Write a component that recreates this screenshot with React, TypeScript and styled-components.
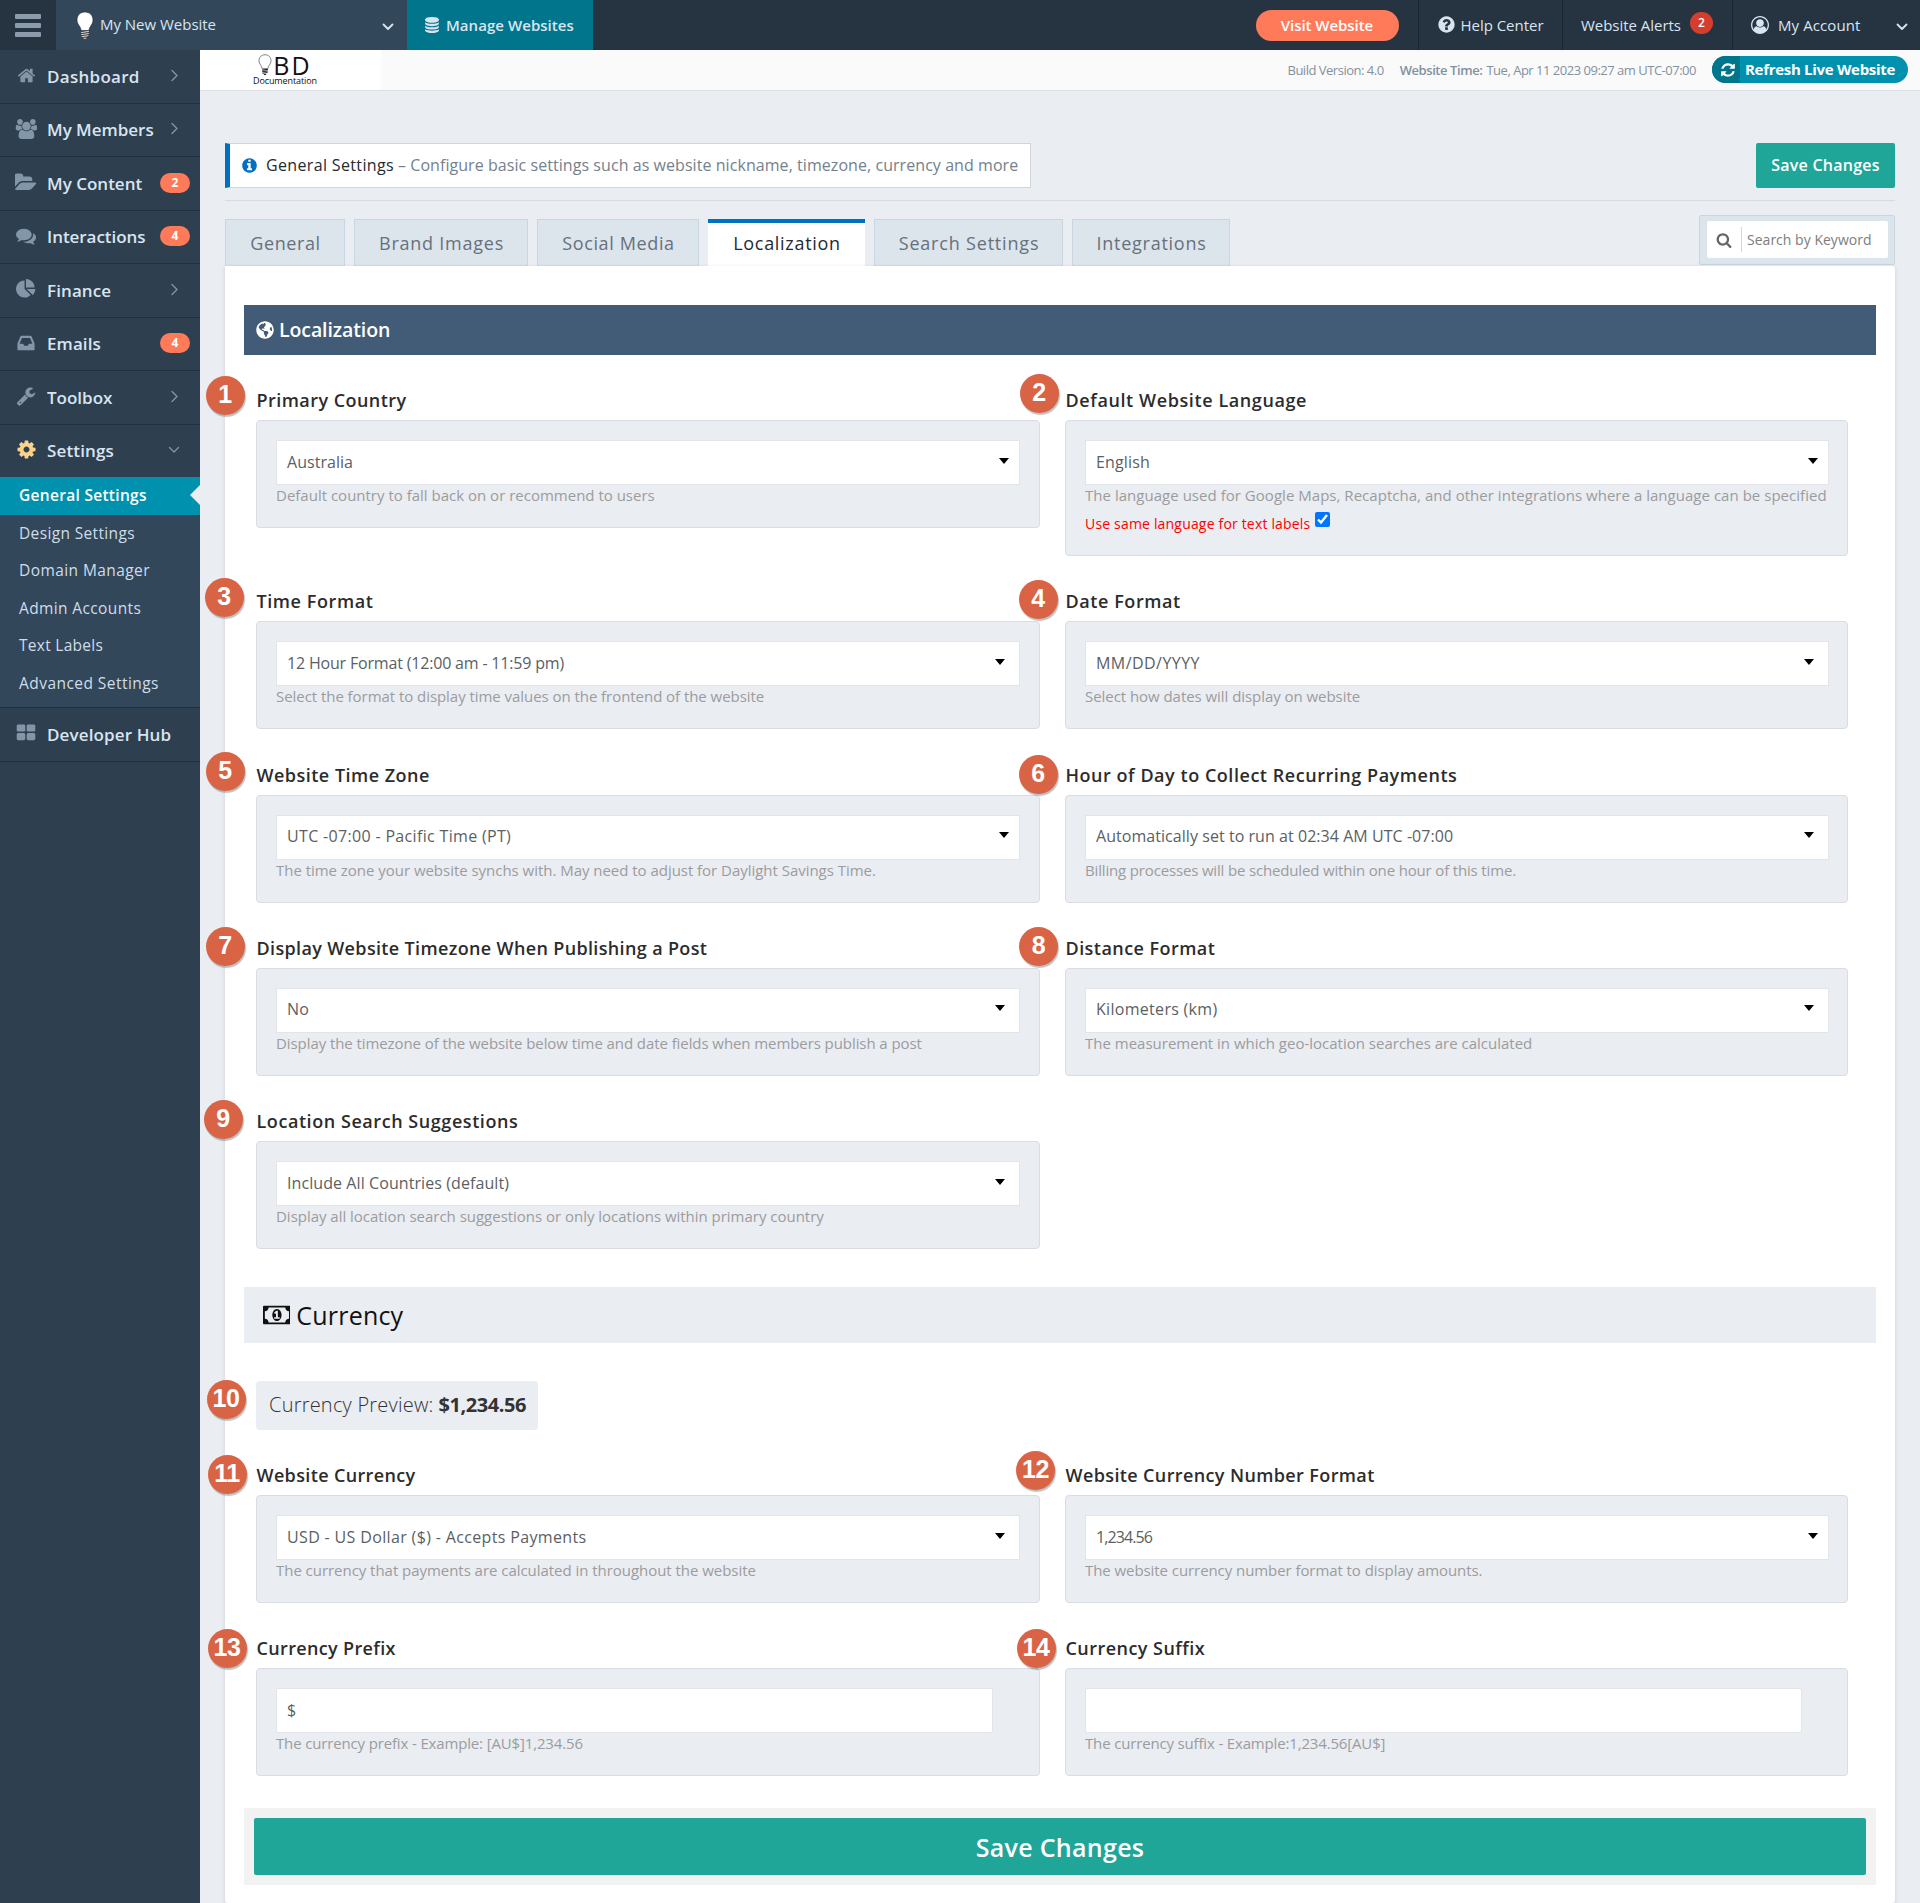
import React from "react";
import styled, { createGlobalStyle, css } from "styled-components";
import { FaGlobeAmericas } from "react-icons/fa";

/* ---------- global ---------- */

const GlobalStyle = createGlobalStyle`
  *, *::before, *::after { box-sizing: border-box; }
  body {
    margin: 0;
    background: #eaedf2;
    font-family: "Open Sans", "Noto Sans", sans-serif;
    color: #333;
  }
`;

const text = css<{ $track?: number }>`
  letter-spacing: ${(p) => p.$track ?? 0}px;
  white-space: nowrap;
`;

/* ---------- icons ---------- */

type IconProps = { path: string; h: number; minX?: number; boxW?: number };

const Glyph = styled.svg`
  display: block;
  flex: none;
  fill: currentColor;
`;

const Icon = ({ path, h, minX = 0, boxW = 1792 }: IconProps) => (
  <Glyph width={(h * boxW) / 1792} height={h} viewBox={`${minX} 0 ${boxW} 1792`} aria-hidden>
    <path d={path} />
  </Glyph>
);

const I = {
  home: "M1472 992v480q0 26-19 45t-45 19h-384v-384h-256v384h-384q-26 0-45-19t-19-45v-480q0-1 .5-3t.5-3l575-474 575 474q1 2 1 6zm223-69l-62 74q-8 9-21 11h-3q-13 0-21-7l-692-577-692 577q-12 8-24 7-13-2-21-11l-62-74q-8-10-7-23.5t11-21.5l719-599q32-26 76-26t76 26l244 204v-195q0-14 9-23t23-9h192q14 0 23 9t9 23v408l219 182q10 8 11 21.5t-7 23.5z",
  users: "M657 896q-162 5-265 128h-134q-82 0-138-40.5t-56-118.5q0-353 124-353 6 0 43.5 21t97.5 42.5 119 21.5q67 0 133-23-5 37-5 66 0 139 81 256zm1071 637q0 120-73 189.5t-194 69.5h-874q-121 0-194-69.5t-73-189.5q0-53 3.5-103.5t14-109 26.5-108.5 43-97.5 62-81 85.5-53.5 111.5-20q10 0 43 21.5t73 48 107 48 135 21.5 135-21.5 107-48 73-48 43-21.5q61 0 111.5 20t85.5 53.5 62 81 43 97.5 26.5 108.5 14 109 3.5 103.5zm-1024-1277q0 106-75 181t-181 75-181-75-75-181 75-181 181-75 181 75 75 181zm704 384q0 159-112.5 271.5t-271.5 112.5-271.5-112.5-112.5-271.5 112.5-271.5 271.5-112.5 271.5 112.5 112.5 271.5zm576 225q0 78-56 118.5t-138 40.5h-134q-103-123-265-128 81-117 81-256 0-29-5-66 66 23 133 23 59 0 119-21.5t97.5-42.5 43.5-21q124 0 124 353zm-128-609q0 106-75 181t-181 75-181-75-75-181 75-181 181-75 181 75 75 181z",
  folder: "M1815 952q0 31-31 66l-336 396q-43 51-120.5 86.5t-143.5 35.5h-1088q-34 0-60.5-13t-26.5-43q0-31 31-66l336-396q43-51 120.5-86.5t143.5-35.5h1088q34 0 60.5 13t26.5 43zm-343-344v160h-832q-94 0-197 47.5t-164 119.5l-337 396-5 6q0-4-.5-12.5t-.5-12.5v-960q0-92 66-158t158-66h320q92 0 158 66t66 158v32h544q92 0 158 66t66 158z",
  comments: "M1408 768q0 139-94 257t-256.5 186.5-353.5 68.5q-86 0-176-16-124 88-278 128-36 9-86 16h-3q-11 0-20.5-8t-11.5-21q-1-3-1-6.5t.5-6.5 2-6l2.5-5 3.5-5.5 4-5 4.5-5 4-4.5q5-6 23-25t26-29.5 22.5-29 25-38.5 20.5-44q-124-72-195-177t-71-224q0-139 94-257t256.5-186.5 353.5-68.5 353.5 68.5 256.5 186.5 94 257zm384 256q0 120-71 224.5t-195 176.5q10 24 20.5 44t25 38.5 22.5 29 26 29.5 23 25q1 1 4 4.5t4.5 5 4 5 3.5 5.5l2.5 5 2 6 .5 6.5-1 6.5q-3 14-13 22t-22 7q-50-7-86-16-154-40-278-128-90 16-176 16-271 0-472-132 58 4 88 4 161 0 309-45t264-129q125-92 192-212t67-254q0-77-23-152 129 71 204 178t75 230z",
  pie: "M768 890l546 546q-106 108-247.5 168t-298.5 60q-209 0-385.5-103t-279.5-279.5-103-385.5 103-385.5 279.5-279.5 385.5-103v762zm187 6h773q0 157-60 298.5t-168 247.5zm709-128h-768v-768q209 0 385.5 103t279.5 279.5 103 385.5z",
  inbox: "M1151 960h316q-1-3-2.5-8.5t-2.5-7.5l-212-496h-708l-212 496q-1 3-2.5 8.5t-2.5 7.5h316l95 192h320zm513 30v482q0 26-19 45t-45 19h-1408q-26 0-45-19t-19-45v-482q0-62 25-123l238-552q10-25 36.5-42t52.5-17h832q26 0 52.5 17t36.5 42l238 552q25 61 25 123z",
  wrench: "M448 1472q0-26-19-45t-45-19-45 19-19 45 19 45 45 19 45-19 19-45zm644-420l-682 682q-37 37-90 37-52 0-91-37l-106-108q-38-36-38-90 0-53 38-91l681-681q39 98 114.5 173.5t173.5 114.5zm634-435q0 39-23 106-47 134-164.5 217.5t-258.5 83.5q-185 0-316.5-131.5t-131.5-316.5 131.5-316.5 316.5-131.5q58 0 121.5 16.5t107.5 46.5q16 11 16 28t-16 28l-293 169v224l193 107q5-3 79-48.5t135.5-81 70.5-35.5q15 0 23.5 10t8.5 25z",
  cog: "M1152 896q0-106-75-181t-181-75-181 75-75 181 75 181 181 75 181-75 75-181zm512-109v222q0 12-8 23t-20 13l-185 28q-19 54-39 91 35 50 107 138 10 12 10 25t-9 23q-27 37-99 108t-94 71q-12 0-26-9l-138-108q-44 23-91 38-16 136-29 186-7 28-36 28h-222q-14 0-24.5-8.5t-11.5-21.5l-28-184q-49-16-90-37l-141 107q-10 9-25 9-14 0-25-11-126-114-165-168-7-10-7-23 0-12 8-23 15-21 51-66.5t54-70.5q-27-50-41-99l-183-27q-13-2-21-12.5t-8-23.5v-222q0-12 8-23t19-13l186-28q14-46 39-92-40-57-107-138-10-12-10-24 0-10 9-23 26-36 98.5-107.5t94.5-71.5q13 0 26 10l138 107q44-23 91-38 16-136 29-186 7-28 36-28h222q14 0 24.5 8.5t11.5 21.5l28 184q49 16 90 37l142-107q9-9 24-9 13 0 25 10 129 119 165 170 7 8 7 22 0 12-8 23-15 21-51 66.5t-54 70.5q26 50 41 98l183 28q13 2 21 12.5t8 23.5z",
  grid: "M832 1024v384q0 52-38 90t-90 38h-512q-52 0-90-38t-38-90v-384q0-52 38-90t90-38h512q52 0 90 38t38 90zm0-768v384q0 52-38 90t-90 38h-512q-52 0-90-38t-38-90v-384q0-52 38-90t90-38h512q52 0 90 38t38 90zm896 768v384q0 52-38 90t-90 38h-512q-52 0-90-38t-38-90v-384q0-52 38-90t90-38h512q52 0 90 38t38 90zm0-768v384q0 52-38 90t-90 38h-512q-52 0-90-38t-38-90v-384q0-52 38-90t90-38h512q52 0 90 38t38 90z",
  database: "M896 768q237 0 443-43t325-127v170q0 69-103 128t-280 93.5-385 34.5-385-34.5-280-93.5-103-128v-170q119 84 325 127t443 43zm0 768q237 0 443-43t325-127v170q0 69-103 128t-280 93.5-385 34.5-385-34.5-280-93.5-103-128v-170q119 84 325 127t443 43zm0-384q237 0 443-43t325-127v170q0 69-103 128t-280 93.5-385 34.5-385-34.5-280-93.5-103-128v-170q119 84 325 127t443 43zm0-1152q208 0 385 34.5t280 93.5 103 128v128q0 69-103 128t-280 93.5-385 34.5-385-34.5-280-93.5-103-128v-128q0-69 103-128t280-93.5 385-34.5z",
  search: "M1216 832q0-185-131.5-316.5t-316.5-131.5-316.5 131.5-131.5 316.5 131.5 316.5 316.5 131.5 316.5-131.5 131.5-316.5zm512 832q0 52-38 90t-90 38q-54 0-90-38l-343-342q-179 124-399 124-143 0-273.5-55.5t-225-150-150-225-55.5-273.5 55.5-273.5 150-225 225-150 273.5-55.5 273.5 55.5 225 150 150 225 55.5 273.5q0 220-124 399l343 343q37 37 37 90z",
  refresh: "M1639 1056q0 5-1 7-64 268-268 434.5t-478 166.5q-146 0-282.5-55t-243.5-157l-129 129q-19 19-45 19t-45-19-19-45v-448q0-26 19-45t45-19h448q26 0 45 19t19 45-19 45l-137 137q71 66 161 102t187 36q134 0 250-65t186-179q11-17 53-117 8-23 30-23h192q13 0 22.5 9.5t9.5 22.5zm25-800v448q0 26-19 45t-45 19h-448q-26 0-45-19t-19-45 19-45l138-138q-148-137-349-137-134 0-250 65t-186 179q-11 17-53 117-8 23-30 23h-199q-13 0-22.5-9.5t-9.5-22.5v-7q65-268 270-434.5t480-166.5q146 0 284 55.5t245 156.5l130-129q19-19 45-19t45 19 19 45z",
  info: "M1152 1376v-160q0-14-9-23t-23-9h-96v-512q0-14-9-23t-23-9h-320q-14 0-23 9t-9 23v160q0 14 9 23t23 9h96v320h-96q-14 0-23 9t-9 23v160q0 14 9 23t23 9h448q14 0 23-9t9-23zm-128-896v-160q0-14-9-23t-23-9h-192q-14 0-23 9t-9 23v160q0 14 9 23t23 9h192q14 0 23-9t9-23zm640 416q0 209-103 385.5t-279.5 279.5-385.5 103-385.5-103-279.5-279.5-103-385.5 103-385.5 279.5-279.5 385.5-103 385.5 103 279.5 279.5 103 385.5z",
  question: "M1024 1376v-192q0-14-9-23t-23-9h-192q-14 0-23 9t-9 23v192q0 14 9 23t23 9h192q14 0 23-9t9-23zm256-672q0-88-55.5-163t-138.5-116-170-41q-243 0-371 213-15 24 8 42l132 100q7 6 19 6 16 0 25-12 53-68 86-92 34-24 86-24 48 0 85.5 26t37.5 59q0 38-20 61t-68 45q-63 28-115.5 86.5t-52.5 125.5v36q0 14 9 23t23 9h192q14 0 23-9t9-23q0-19 21.5-49.5t54.5-49.5q32-18 49-28.5t46-35 44.5-48 28-60.5 12.5-81zm384 192q0 209-103 385.5t-279.5 279.5-385.5 103-385.5-103-279.5-279.5-103-385.5 103-385.5 279.5-279.5 385.5-103 385.5 103 279.5 279.5 103 385.5z",
  user: "M896 0q182 0 348 71t286 191 191 286 71 348q0 181-70.5 347t-190.5 286-286 191.5-349 71.5-349-71-285.5-191.5-190.5-286-71-347.5 71-348 191-286 286-191 348-71zm619 1351q149-205 149-455 0-156-61-298t-164-245-245-164-298-61-298 61-245 164-164 245-61 298q0 250 149 455 66-327 306-327 131 128 313 128t313-128q240 0 306 327zm-235-647q0-159-112.5-271.5t-271.5-112.5-271.5 112.5-112.5 271.5 112.5 271.5 271.5 112.5 271.5-112.5 112.5-271.5z",
  money: "M704 1152h384v-96h-128v-448h-114l-148 137 77 80q42-37 55-57h2v288h-128v96zm512-256q0 70-21 142t-59.5 134-101.5 101-138 39-138-39-101.5-101-59.5-134-21-142 21-142 59.5-134 101.5-101 138-39 138 39 101.5 101 59.5 134 21 142zm512 256v-512q-106 0-181-75t-75-181h-1152q0 106-75 181t-181 75v512q106 0 181 75t75 181h1152q0-106 75-181t181-75zm128-832v1152q0 26-19 45t-45 19h-1792q-26 0-45-19t-19-45v-1152q0-26 19-45t45-19h1792q26 0 45 19t19 45z",
};

const Chevron = ({ w, h, d, weight }: { w: number; h: number; d: string; weight: number }) => (
  <svg width={w} height={h} viewBox={`0 0 ${w} ${h}`} fill="none" stroke="currentColor" strokeWidth={weight} strokeLinecap="round" strokeLinejoin="round" aria-hidden>
    <path d={d} />
  </svg>
);

const Bulb = ({ w, h, filled }: { w: number; h: number; filled?: boolean }) => (
  <svg width={w} height={h} viewBox="0 0 18 28" aria-hidden>
    <path
      d="M9 1C4 1 1 4.600 1 9c0 3.700 2.500 5.600 3.500 8.200.4 1 .5 1.800.6 2.300h7.800c.1-.5.200-1.300.6-2.300C14.500 14.600 17 12.700 17 9c0-4.400-3-8-8-8z"
      fill={filled ? "#fff" : "none"}
      stroke={filled ? "#222" : "#555"}
      strokeWidth={filled ? 0.6 : 1}
    />
    {filled && <path d="M5.200 20h7.600v6l-2 2H7.200l-2-2z" fill="#333" />}
    <path
      d="M5.200 21.500l7.600-1M5.200 23.600l7.600-1M5.600 25.700l6.800-1M7.500 27.200h3"
      stroke={filled ? "#e8e8e8" : "#222"}
      strokeWidth={filled ? 1 : 1.4}
      fill="none"
    />
  </svg>
);

/* ---------- top bar ---------- */

const TopBar = styled.header`
  display: flex;
  height: 50px;
  background: #263341;
  color: #d8e5f0;
  font-size: 15px;
`;

const MenuButton = styled.div`
  width: 56px;
  display: flex;
  flex-direction: column;
  align-items: center;
  justify-content: center;
  gap: 4px;
`;

const MenuLine = styled.span`
  width: 26px;
  height: 5px;
  border-radius: 1px;
  background: #8b9bab;
`;

const SiteSelect = styled.div`
  width: 351px;
  display: flex;
  align-items: center;
  padding: 0 13px 0 20px;
  background: #33475b;
`;

const SiteName = styled.span`
  ${text}
  flex: 1;
  margin: -2px 0 0 6px;
`;

const SelectCaret = styled.span`
  display: flex;
  margin-top: 3px;
`;

const ManageButton = styled.div`
  width: 186px;
  display: flex;
  align-items: center;
  gap: 6px;
  padding: 0 0 1px 17px;
  background: #00758c;
  font-weight: 600;
`;

const Label = styled.span<{ $track?: number }>`
  ${text}
`;

const TopRight = styled.div`
  display: flex;
  align-items: center;
  margin-left: auto;
`;

const VisitButton = styled.div`
  width: 143px;
  height: 31px;
  margin-right: 19px;
  border-radius: 16px;
  background: #ff7a59;
  color: #fff;
  font-weight: 600;
  line-height: 30px;
  text-align: center;
`;

const TopItem = styled.div<{ $width: number; $gap: number }>`
  display: flex;
  align-items: center;
  gap: ${(p) => p.$gap}px;
  width: ${(p) => p.$width}px;
  height: 50px;
  padding: 0 0 1px 18px;
  border-left: 1px solid #1a2531;
`;

const AlertBadge = styled.span`
  width: 23px;
  height: 22px;
  margin-top: -3px;
  border-radius: 11px;
  background: #d53d2e;
  color: #fff;
  font-size: 12px;
  font-weight: 600;
  line-height: 22px;
  text-align: center;
`;

const AccountCaret = styled.span`
  display: flex;
  margin: 4px 12px 0 auto;
`;

/* ---------- sidebar ---------- */

const Body = styled.div`
  display: flex;
  height: 1853px;
`;

const Sidebar = styled.nav`
  flex: none;
  width: 200px;
  background: #2e3f50;
`;

const SideRow = styled.div<{ $last?: boolean }>`
  display: flex;
  align-items: center;
  height: ${(p) => (p.$last ? 52.5 : 53.5)}px;
  padding-left: 15px;
  border-bottom: ${(p) => (p.$last ? 0 : 1)}px solid #223140;
  color: #d8e5f0;
  font-size: 17px;
  font-weight: 600;
`;

const SideIcon = styled.span<{ $active?: boolean }>`
  display: flex;
  justify-content: center;
  width: 22px;
  margin: 0 10px 2px 0;
  color: ${(p) => (p.$active ? "#fbd287" : "#8296a8")};
`;

const SideArrow = styled.span`
  display: flex;
  justify-content: center;
  width: 12px;
  margin: 0 20px 2px auto;
  color: #8296a8;
`;

const SideBadge = styled.span`
  width: 30px;
  height: 20px;
  margin: 0 10px 1px auto;
  border-radius: 10px;
  background: #ff7a59;
  color: #fff;
  font-size: 12px;
  font-weight: 700;
  line-height: 20px;
  text-align: center;
`;

const SubMenu = styled.div`
  padding-bottom: 5px;
  border-bottom: 1px solid #223140;
  background: #33475b;
`;

const SubItem = styled.div<{ $active?: boolean }>`
  display: flex;
  align-items: center;
  height: 37.5px;
  padding: 0 0 1px 19px;
  font-size: 15.500px;
  color: #cfdde9;
  ${(p) =>
    p.$active &&
    css`
      background: #0091ae;
      color: #fff;
      font-weight: 600;
    `}
`;

const SubPointer = styled.i`
  margin-left: auto;
  border: 10px solid transparent;
  border-left: 0;
  border-right-color: #eaedf2;
`;

/* ---------- main ---------- */

const Main = styled.main`
  flex: 1;
  display: flex;
  flex-direction: column;
  min-width: 0;
`;

const StatusBar = styled.div`
  display: flex;
  align-items: center;
  height: 41px;
  padding: 0 12px 1px 0;
  border-bottom: 1px solid #dcdfe3;
  background: #fafafa;
  color: #8391a0;
  font-size: 13px;
`;

const LogoBox = styled.div`
  display: flex;
  flex-direction: column;
  align-items: center;
  width: 181px;
  height: 40px;
  padding: 4px 11px 0 0;
  background: #fff;
  color: #111;
`;

const LogoTop = styled.div`
  display: flex;
  align-items: center;
  gap: 1px;
  height: 22px;
`;

const LogoLetters = styled.span`
  font-size: 25px;
  line-height: 22px;
  letter-spacing: 2px;
`;

const LogoCaption = styled.span`
  ${text}
  font-size: 9px;
  line-height: 10px;
`;

const BuildInfo = styled.div`
  display: flex;
  align-items: center;
  margin-left: auto;
`;

const TimeLabel = styled.b<{ $track?: number }>`
  ${text}
  margin: 0 4px 0 16px;
  font-weight: 600;
`;

const RefreshButton = styled.div`
  display: flex;
  align-items: center;
  width: 196px;
  height: 27px;
  margin-left: 16px;
  border-radius: 14px;
  overflow: hidden;
  background: #0091ae;
  color: #fff;
  font-size: 15px;
  font-weight: 700;
  line-height: 24px;
`;

const RefreshIcon = styled.span`
  display: flex;
  align-items: center;
  justify-content: center;
  width: 28px;
  height: 27px;
  margin-right: 5px;
  padding-left: 3px;
  background: #00758c;
`;

const RefreshText = styled(Label)`
  margin-top: -2px;
`;

const Content = styled.div`
  flex: 1;
  display: flex;
  flex-direction: column;
  padding: 52px 25px 0;
`;

const IntroRow = styled.div`
  display: flex;
  justify-content: space-between;
  padding-bottom: 12px;
  border-bottom: 1px solid #d8dadf;
`;

const IntroBox = styled.div`
  display: flex;
  align-items: center;
  width: 806px;
  height: 45px;
  padding: 0 0 1px 11px;
  border: 1px solid #d0d5da;
  border-left: 5px solid #0070c0;
  background: #fff;
  color: #0070c0;
  font-size: 16px;
`;

const IntroTitle = styled.span`
  ${text}
  margin: 0 4px 0 8px;
  color: #222b33;
`;

const IntroText = styled.span`
  ${text}
  color: #74818d;
`;

const SaveButton = styled.div<{ $big?: boolean }>`
  display: flex;
  align-items: center;
  justify-content: center;
  width: ${(p) => (p.$big ? "auto" : "139px")};
  height: ${(p) => (p.$big ? 57 : 45)}px;
  padding-bottom: ${(p) => (p.$big ? 0 : 1)}px;
  border-radius: 2px;
  background: #1fa699;
  color: #fff;
  font-size: ${(p) => (p.$big ? 25 : 16)}px;
  font-weight: 600;
`;

const TabsRow = styled.div`
  display: flex;
  align-items: flex-end;
  gap: 9px;
  height: 51px;
  margin-top: 14px;
`;

const Tab = styled.div<{ $width: number; $active?: boolean }>`
  ${text}
  width: ${(p) => p.$width}px;
  height: 47px;
  padding-left: 1px;
  border: 1px solid #c9d6e2;
  border-bottom-color: #d3dee8;
  background: #dce4ec;
  color: #66717c;
  font-size: 18px;
  line-height: 46px;
  text-align: center;
  ${(p) =>
    p.$active &&
    css`
      border: 0;
      border-top: 4px solid #0070c0;
      background: #fff;
      color: #222b33;
      line-height: 41px;
    `}
`;

const SearchFrame = styled.div`
  width: 196px;
  height: 50px;
  margin: 0 0 1px auto;
  padding: 5px 6px 6px 7px;
  border: 1px solid #c9d6e2;
  border-radius: 2px;
  background: #dce4ec;
`;

const SearchInput = styled.div`
  display: flex;
  align-items: center;
  height: 37px;
  border-radius: 2px;
  background: #fff;
  color: #666;
`;

const SearchIcon = styled.span`
  display: flex;
  align-items: center;
  justify-content: center;
  width: 35px;
  height: 25px;
  border-right: 1px solid #d5d5d5;
`;

const SearchHint = styled.span`
  ${text}
  margin-left: 5px;
  color: #7d7d7d;
  font-size: 14px;
`;

const Panel = styled.section`
  flex: 1;
  padding: 39px 19px 0;
  border-radius: 0 3px 3px 3px;
  background: #fff;
  box-shadow: 0 1px 4px rgba(60, 80, 110, 0.16);
`;

const SectionBar = styled.h2`
  display: flex;
  align-items: center;
  gap: 5px;
  height: 50px;
  margin: 0 0 29px;
  padding: 0 0 1px 12px;
  background: #425b76;
  color: #fff;
  font-size: 19.500px;
  font-weight: 600;
`;

const CurrencyBar = styled.h2`
  display: flex;
  align-items: center;
  gap: 6px;
  height: 56px;
  margin: 38px 0 38px;
  padding: 0 0 0 18.500px;
  background: #eaedf2;
  color: #111;
  font-size: 25px;
  font-weight: 500;
`;

const FieldGrid = styled.div`
  display: grid;
  grid-template-columns: 784px 783px;
  column-gap: 25px;
  row-gap: 29.250px;
  align-items: start;
  padding-left: 12px;
`;

const FieldCell = styled.div`
  position: relative;
`;

const FieldLabel = styled.div`
  ${text}
  height: 36px;
  padding-left: 0.5px;
  color: #2c2c2c;
  font-size: 18px;
  font-weight: 600;
  line-height: 32px;
`;

const FieldBox = styled.div<{ $tall?: boolean }>`
  height: ${(p) => (p.$tall ? 136 : 108)}px;
  padding: 19px;
  border: 1px solid #d9dde3;
  border-radius: 4px;
  background: #eaedf2;
`;

const Control = styled.div<{ $input?: boolean; $inset?: number }>`
  display: flex;
  align-items: center;
  justify-content: space-between;
  width: ${(p) => (p.$input ? "717px" : "744px")};
  height: 45px;
  padding: 0 ${(p) => p.$inset ?? 14}px 2px 10px;
  border: 1px solid #e2e4e7;
  border-radius: ${(p) => (p.$input ? 2 : 0)}px;
  background: #fff;
  color: #5a5f63;
  font-size: 16px;
`;

const Caret = styled.i`
  margin-top: -2px;
  border: 5px solid transparent;
  border-top: 6px solid #000;
  border-bottom: 0;
`;

const Help = styled.div`
  ${text}
  height: 24px;
  color: #9c9c9e;
  font-size: 15px;
  line-height: 21px;
`;

const SameLanguage = styled.label`
  display: flex;
  align-items: center;
  gap: 5px;
  height: 29px;
  color: #f00;
  font-size: 14px;
`;

const Checkbox = styled.input.attrs({ type: "checkbox" })`
  width: 15px;
  height: 15px;
  margin: 0 0 8px;
  accent-color: #0075ff;
`;

const Marker = styled.span<{ $x: number; $y: number }>`
  position: absolute;
  left: ${(p) => p.$x}px;
  top: ${(p) => p.$y}px;
  z-index: 1;
  width: 39px;
  height: 39px;
  border-radius: 50%;
  background: #d96445;
  box-shadow: 1px 2px 1px rgba(0, 0, 0, 0.25);
  color: #fff;
  font: 700 25px/37px "Liberation Sans", Arial, sans-serif;
  letter-spacing: -0.5px;
  text-align: center;
`;

const Preview = styled.div`
  position: relative;
  width: 282px;
  height: 49px;
  margin: 0 0 29px 12px;
  padding-left: 13px;
  border-radius: 4px;
  background: #eaedf2;
  color: #333;
  font-size: 20px;
  line-height: 48px;
`;

const PreviewText = styled.span<{ $bold?: boolean; $track?: number }>`
  ${text}
  font-weight: ${(p) => (p.$bold ? 700 : 300)};
  margin-right: 5px;
`;

const SubmitStrip = styled.div`
  margin-top: 32px;
  padding: 10px;
  background: #f2f2f2;
`;

/* ---------- data ---------- */

type Txt = [string, number];

type FieldData = {
  n: number;
  at: [number, number];
  label: Txt;
  value: Txt;
  help: Txt;
  inset?: number;
  input?: boolean;
  same?: boolean;
};

const sideItems: { label: Txt; icon: React.ReactNode; badge?: number }[] = [
  { label: ["Dashboard", 0.28], icon: <Icon path={I.home} h={19} /> },
  { label: ["My Members", -0.02], icon: <Icon path={I.users} h={20} boxW={2048} /> },
  { label: ["My Content", 0], icon: <Icon path={I.folder} h={21} boxW={1856} />, badge: 2 },
  { label: ["Interactions", -0.05], icon: <Icon path={I.comments} h={20} />, badge: 4 },
  { label: ["Finance", 0.1], icon: <Icon path={I.pie} h={20} /> },
  { label: ["Emails", 0.1], icon: <Icon path={I.inbox} h={20} />, badge: 4 },
  { label: ["Toolbox", 0], icon: <Icon path={I.wrench} h={20} /> },
];

const subItems: Txt[] = [
  ["Design Settings", 0.35],
  ["Domain Manager", 0.42],
  ["Admin Accounts", 0.37],
  ["Text Labels", 0.28],
  ["Advanced Settings", 0.45],
];

const tabs: { label: Txt; width: number; active?: boolean }[] = [
  { label: ["General", 0.61], width: 120 },
  { label: ["Brand Images", 0.76], width: 174 },
  { label: ["Social Media", 0.63], width: 162 },
  { label: ["Localization", 0.69], width: 157, active: true },
  { label: ["Search Settings", 0.81], width: 189 },
  { label: ["Integrations", 0.74], width: 158 },
];

const localization: FieldData[] = [
  { n: 1, at: [-50.5, -8], label: ["Primary Country", 0.45], value: ["Australia", 0.04], help: ["Default country to fall back on or recommend to users", 0] },
  { n: 2, at: [-45.5, -10.5], label: ["Default Website Language", 0.6], value: ["English", 0.16], help: ["The language used for Google Maps, Recaptcha, and other integrations where a language can be specified", 0.03], inset: 10, same: true },
  { n: 3, at: [-51.5, -7.5], label: ["Time Format", 0.58], value: ["12 Hour Format (12:00 am - 11:59 pm)", -0.18], help: ["Select the format to display time values on the frontend of the website", -0.05] },
  { n: 4, at: [-46.5, -5.5], label: ["Date Format", 0.58], value: ["MM/DD/YYYY", 0.45], help: ["Select how dates will display on website", -0.05] },
  { n: 5, at: [-50.5, -6.5], label: ["Website Time Zone", 0.48], value: ["UTC -07:00 - Pacific Time (PT)", 0.33], help: ["The time zone your website synchs with. May need to adjust for Daylight Savings Time.", -0.03], inset: 10 },
  { n: 6, at: [-46.5, -3.5], label: ["Hour of Day to Collect Recurring Payments", 0.54], value: ["Automatically set to run at 02:34 AM UTC -07:00", 0.05], help: ["Billing processes will be scheduled within one hour of this time.", -0.16] },
  { n: 7, at: [-50.5, -4.5], label: ["Display Website Timezone When Publishing a Post", 0.35], value: ["No", 0.3], help: ["Display the timezone of the website below time and date fields when members publish a post", -0.08] },
  { n: 8, at: [-46, -5], label: ["Distance Format", 0.45], value: ["Kilometers (km)", 0.3], help: ["The measurement in which geo-location searches are calculated", 0] },
  { n: 9, at: [-52.5, -5.5], label: ["Location Search Suggestions", 0.56], value: ["Include All Countries (default)", 0.08], help: ["Display all location search suggestions or only locations within primary country", -0.02] },
];

const currency: FieldData[] = [
  { n: 11, at: [-48.5, -4.5], label: ["Website Currency", 0.36], value: ["USD - US Dollar ($) - Accepts Payments", 0.35], help: ["The currency that payments are calculated in throughout the website", -0.04] },
  { n: 12, at: [-49, -8.5], label: ["Website Currency Number Format", 0.38], value: ["1,234.56", -0.9], help: ["The website currency number format to display amounts.", -0.07], inset: 10 },
  { n: 13, at: [-48.5, -3.5], label: ["Currency Prefix", 0.35], value: ["$", 0], help: ["The currency prefix - Example: [AU$]1,234.56", -0.15], input: true },
  { n: 14, at: [-48.5, -3.5], label: ["Currency Suffix", 0.46], value: ["", 0], help: ["The currency suffix - Example:1,234.56[AU$]", -0.16], input: true },
];

localization[0].inset = 10;

/* ---------- pieces ---------- */

const Field = ({ n, at, label, value, help, inset, input, same }: FieldData) => (
  <FieldCell>
    <Marker $x={at[0]} $y={at[1]}>{n}</Marker>
    <FieldLabel $track={label[1]}>{label[0]}</FieldLabel>
    <FieldBox $tall={same}>
      <Control $input={input} $inset={inset}>
        <Label $track={value[1]}>{value[0]}</Label>
        {!input && <Caret />}
      </Control>
      <Help $track={help[1]}>{help[0]}</Help>
      {same && (
        <SameLanguage>
          <Label $track={0.18}>Use same language for text labels</Label>
          <Checkbox defaultChecked />
        </SameLanguage>
      )}
    </FieldBox>
  </FieldCell>
);

const right = "M3 1.500l5 5-5 5";
const down = "M1.500 1.500l4.500 4.500 4.500-4.500";

export default function App() {
  return (
    <>
      <GlobalStyle />
      <TopBar>
        <MenuButton>
          <MenuLine />
          <MenuLine />
          <MenuLine />
        </MenuButton>
        <SiteSelect>
          <Bulb w={18} h={28} filled />
          <SiteName $track={-0.02}>My New Website</SiteName>
          <SelectCaret>
            <Chevron w={12} h={8} weight={1.8} d={down} />
          </SelectCaret>
        </SiteSelect>
        <ManageButton>
          <Icon path={I.database} h={16} />
          <Label $track={0.05}>Manage Websites</Label>
        </ManageButton>
        <TopRight>
          <VisitButton>
            <Label $track={-0.05}>Visit Website</Label>
          </VisitButton>
          <TopItem $width={144.5} $gap={5}>
            <Icon path={I.question} h={19} />
            <Label $track={-0.03}>Help Center</Label>
          </TopItem>
          <TopItem $width={170} $gap={9}>
            <Label $track={-0.03}>Website Alerts</Label>
            <AlertBadge>2</AlertBadge>
          </TopItem>
          <TopItem $width={188} $gap={9}>
            <Icon path={I.user} h={18} />
            <Label $track={0.1}>My Account</Label>
            <AccountCaret>
              <Chevron w={12} h={8} weight={1.8} d={down} />
            </AccountCaret>
          </TopItem>
        </TopRight>
      </TopBar>
      <Body>
        <Sidebar>
          {sideItems.map(({ label, icon, badge }) => (
            <SideRow key={label[0]}>
              <SideIcon>{icon}</SideIcon>
              <Label $track={label[1]}>{label[0]}</Label>
              {badge ? (
                <SideBadge>{badge}</SideBadge>
              ) : (
                <SideArrow>
                  <Chevron w={11} h={13} weight={1.3} d={right} />
                </SideArrow>
              )}
            </SideRow>
          ))}
          <SideRow $last>
            <SideIcon $active>
              <Icon path={I.cog} h={21} />
            </SideIcon>
            <Label $track={0.15}>Settings</Label>
            <SideArrow>
              <Chevron w={12} h={8} weight={1.3} d={down} />
            </SideArrow>
          </SideRow>
          <SubMenu>
            <SubItem $active>
              <Label $track={0.3}>General Settings</Label>
              <SubPointer />
            </SubItem>
            {subItems.map(([name, track]) => (
              <SubItem key={name}>
                <Label $track={track}>{name}</Label>
              </SubItem>
            ))}
          </SubMenu>
          <SideRow>
            <SideIcon>
              <Icon path={I.grid} h={20} />
            </SideIcon>
            <Label $track={0.13}>Developer Hub</Label>
          </SideRow>
        </Sidebar>
        <Main>
          <StatusBar>
            <LogoBox>
              <LogoTop>
                <Bulb w={14} h={21} />
                <LogoLetters>BD</LogoLetters>
              </LogoTop>
              <LogoCaption $track={-0.1}>Documentation</LogoCaption>
            </LogoBox>
            <BuildInfo>
              <Label $track={-0.49}>Build Version: 4.0</Label>
              <TimeLabel $track={-0.42}>Website Time:</TimeLabel>
              <Label $track={-0.49}>Tue, Apr 11 2023 09:27 am UTC-07:00</Label>
            </BuildInfo>
            <RefreshButton>
              <RefreshIcon>
                <Icon path={I.refresh} h={16} />
              </RefreshIcon>
              <RefreshText $track={-0.3}>Refresh Live Website</RefreshText>
            </RefreshButton>
          </StatusBar>
          <Content>
            <IntroRow>
              <IntroBox>
                <Icon path={I.info} h={17} />
                <IntroTitle $track={0.35}>General Settings</IntroTitle>
                <IntroText $track={0.06}>– Configure basic settings such as website nickname, timezone, currency and more</IntroText>
              </IntroBox>
              <SaveButton>
                <Label $track={0.25}>Save Changes</Label>
              </SaveButton>
            </IntroRow>
            <TabsRow>
              {tabs.map(({ label, width, active }) => (
                <Tab key={label[0]} $width={width} $active={active} $track={label[1]}>
                  {label[0]}
                </Tab>
              ))}
              <SearchFrame>
                <SearchInput>
                  <SearchIcon>
                    <Icon path={I.search} h={16} />
                  </SearchIcon>
                  <SearchHint $track={0.02}>Search by Keyword</SearchHint>
                </SearchInput>
              </SearchFrame>
            </TabsRow>
            <Panel>
              <SectionBar>
                <FaGlobeAmericas size={18} />
                <Label $track={-0.1}>Localization</Label>
              </SectionBar>
              <FieldGrid>
                {localization.map((f) => (
                  <Field key={f.n} {...f} />
                ))}
              </FieldGrid>
              <CurrencyBar>
                <Icon path={I.money} h={26} minX={-64} boxW={1920} />
                <Label $track={0.2}>Currency</Label>
              </CurrencyBar>
              <Preview>
                <Marker $x={-49.5} $y={-1.5}>10</Marker>
                <PreviewText $track={0.22}>Currency Preview:</PreviewText>
                <PreviewText $bold $track={-0.44}>$1,234.56</PreviewText>
              </Preview>
              <FieldGrid>
                {currency.map((f) => (
                  <Field key={f.n} {...f} />
                ))}
              </FieldGrid>
              <SubmitStrip>
                <SaveButton $big>
                  <Label $track={0.3}>Save Changes</Label>
                </SaveButton>
              </SubmitStrip>
            </Panel>
          </Content>
        </Main>
      </Body>
    </>
  );
}
